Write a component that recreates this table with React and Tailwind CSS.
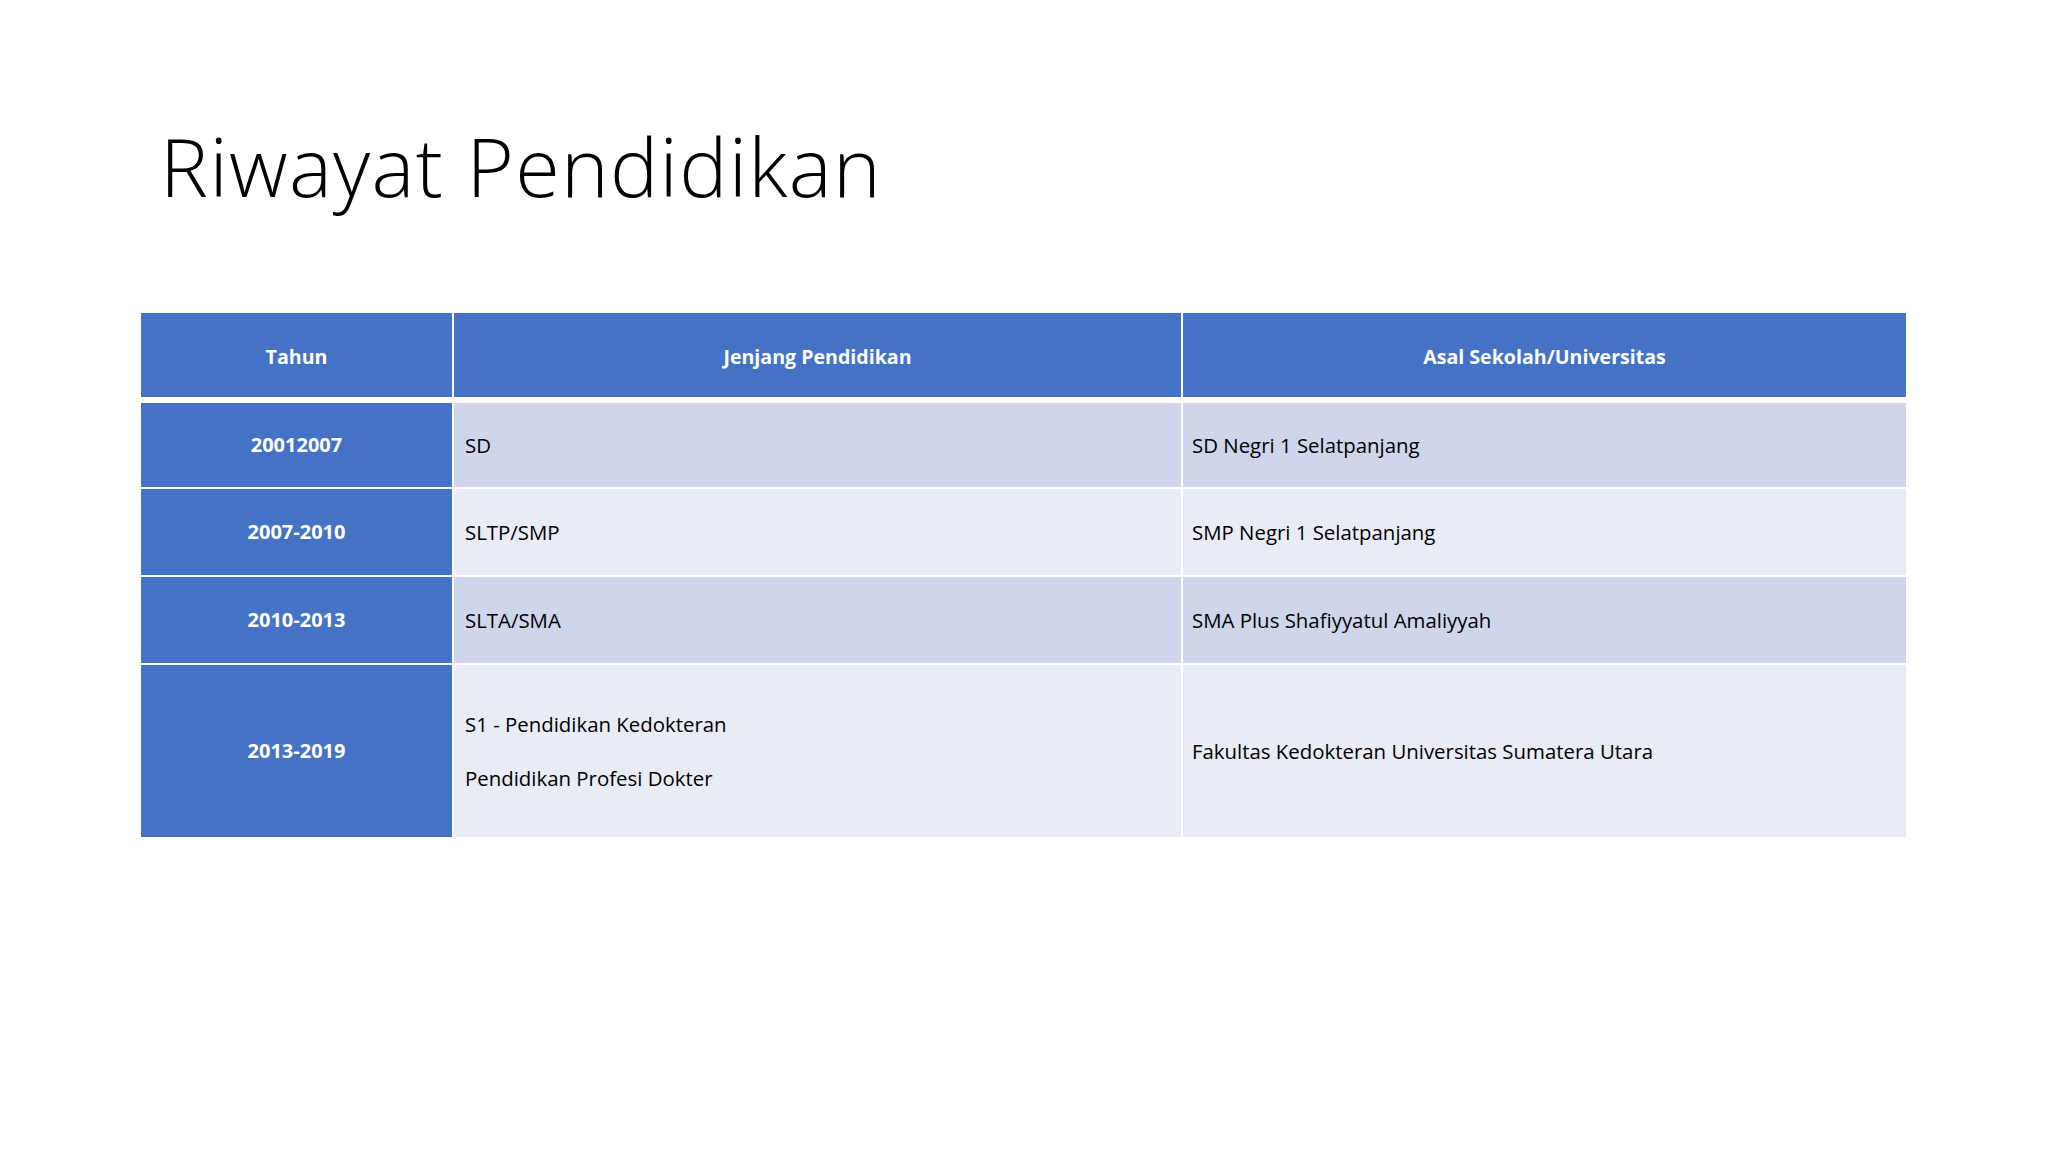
export default function App() {
  const font = { fontFamily: '"Open Sans", "Liberation Sans", sans-serif' };
  const rows = [
    { y: "20012007", j: ["SD"], a: "SD Negri 1 Selatpanjang", bg: "bg-[#cfd5ea]", h: "h-[84px]" },
    { y: "2007-2010", j: ["SLTP/SMP"], a: "SMP Negri 1 Selatpanjang", bg: "bg-[#e9ebf5]", h: "h-[86px]" },
    { y: "2010-2013", j: ["SLTA/SMA"], a: "SMA Plus Shafiyyatul Amaliyyah", bg: "bg-[#cfd5ea]", h: "h-[86px]" },
    { y: "2013-2019", j: ["S1 - Pendidikan Kedokteran", "Pendidikan Profesi Dokter"], a: "Fakultas Kedokteran Universitas Sumatera Utara", bg: "bg-[#e9ebf5]", h: "h-[172px]" },
  ];
  return (
    <div className="w-[2048px] h-[1152px] bg-white overflow-hidden" style={font}>
      <div className="pt-[117px] pl-[160px]">
        <h1 className="text-[81px] font-light leading-[1.2] text-black tracking-[1.3px]">Riwayat Pendidikan</h1>
      </div>
      <div className="ml-[141px] mt-[99px] w-[1765px] flex flex-col">
        <div className="grid grid-cols-[311px_727px_723px] gap-x-[2px] h-[84px] mb-[6px]">
          <div className="bg-[#4472c4] flex items-center justify-center pt-[3px] text-white font-bold text-[19.6px]">Tahun</div>
          <div className="bg-[#4472c4] flex items-center justify-center pt-[3px] text-white font-bold text-[19.6px]">Jenjang Pendidikan</div>
          <div className="bg-[#4472c4] flex items-center justify-center pt-[3px] text-white font-bold text-[19.6px]">Asal Sekolah/Universitas</div>
        </div>
        <div className="flex flex-col gap-y-[2px]">
          {rows.map((r) => (
            <div key={r.y} className={"grid grid-cols-[311px_727px_723px] gap-x-[2px] " + r.h}>
              <div className="bg-[#4472c4] flex items-center justify-center text-white font-bold text-[20px]">{r.y}</div>
              <div className={r.bg + " flex flex-col justify-center gap-y-[26px] pl-[11px] text-black text-[20.4px] leading-[28px]"}>
                {r.j.map((t) => (
                  <div key={t}>{t}</div>
                ))}
              </div>
              <div className={r.bg + " flex items-center pl-[9px] text-black text-[20.4px] leading-[28px]"}>{r.a}</div>
            </div>
          ))}
        </div>
      </div>
    </div>
  );
}
